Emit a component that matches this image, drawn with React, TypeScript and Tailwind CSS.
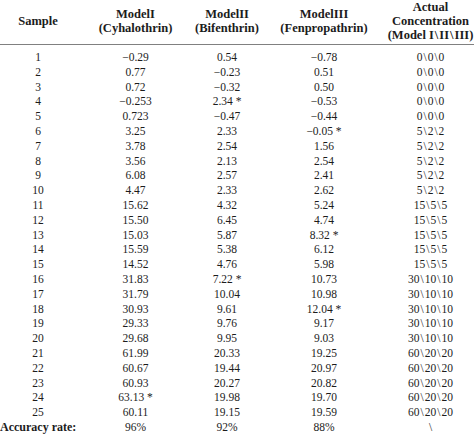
const ROWS: [string, string, string, string, string][] = [
  ['1', '−0.29', '0.54', '−0.78', '0\\0\\0'],
  ['2', '0.77', '−0.23', '0.51', '0\\0\\0'],
  ['3', '0.72', '−0.32', '0.50', '0\\0\\0'],
  ['4', '−0.253', '2.34 *', '−0.53', '0\\0\\0'],
  ['5', '0.723', '−0.47', '−0.44', '0\\0\\0'],
  ['6', '3.25', '2.33', '−0.05 *', '5\\2\\2'],
  ['7', '3.78', '2.54', '1.56', '5\\2\\2'],
  ['8', '3.56', '2.13', '2.54', '5\\2\\2'],
  ['9', '6.08', '2.57', '2.41', '5\\2\\2'],
  ['10', '4.47', '2.33', '2.62', '5\\2\\2'],
  ['11', '15.62', '4.32', '5.24', '15\\5\\5'],
  ['12', '15.50', '6.45', '4.74', '15\\5\\5'],
  ['13', '15.03', '5.87', '8.32 *', '15\\5\\5'],
  ['14', '15.59', '5.38', '6.12', '15\\5\\5'],
  ['15', '14.52', '4.76', '5.98', '15\\5\\5'],
  ['16', '31.83', '7.22 *', '10.73', '30\\10\\10'],
  ['17', '31.79', '10.04', '10.98', '30\\10\\10'],
  ['18', '30.93', '9.61', '12.04 *', '30\\10\\10'],
  ['19', '29.33', '9.76', '9.17', '30\\10\\10'],
  ['20', '29.68', '9.95', '9.03', '30\\10\\10'],
  ['21', '61.99', '20.33', '19.25', '60\\20\\20'],
  ['22', '60.67', '19.44', '20.97', '60\\20\\20'],
  ['23', '60.93', '20.27', '20.82', '60\\20\\20'],
  ['24', '63.13 *', '19.98', '19.70', '60\\20\\20'],
  ['25', '60.11', '19.15', '19.59', '60\\20\\20'],
]

const GRID = 'grid grid-cols-[76px_119px_64px_130px_83px]'

function Cell({ children }: { children: React.ReactNode }) {
  return <div className="flex justify-center whitespace-nowrap">{children}</div>
}

// The concentration triples read "a\b\c"; give the backslashes a little room like the original face.
function Triple({ value }: { value: string }) {
  const parts = value.split('\\')
  return (
    <Cell>
      {parts.map((p, i) => (
        <span key={i}>
          {i > 0 && <span className="mx-[1px]">\</span>}
          {p}
        </span>
      ))}
    </Cell>
  )
}

export default function App() {
  return (
    <div className="h-[435px] w-[474px] overflow-hidden bg-white text-[#1c1c1c]" style={{ fontFamily: '"Liberation Serif", "Times New Roman", serif' }}>
      {/* Header */}
      <div className={`${GRID} h-[45px] items-center border-b border-[#808080] pb-[5px] text-[12.5px] font-bold leading-[14px]`}>
        <Cell>Sample</Cell>
        <div className="flex flex-col items-center whitespace-nowrap">
          <span>ModelI</span>
          <span>(Cyhalothrin)</span>
        </div>
        <div className="flex flex-col items-center whitespace-nowrap">
          <span>ModelII</span>
          <span>(Bifenthrin)</span>
        </div>
        <div className="flex flex-col items-center whitespace-nowrap">
          <span>ModelIII</span>
          <span>(Fenpropathrin)</span>
        </div>
        <div className="flex flex-col items-center whitespace-nowrap">
          <span>Actual</span>
          <span>Concentration</span>
          <span>(Model I<span className="mx-[1px]">\</span>II<span className="mx-[1px]">\</span>III)</span>
        </div>
      </div>

      {/* Body */}
      <div className="pt-[5px] text-[11.5px] leading-[14.8px]">
        {ROWS.map((r) => (
          <div key={r[0]} className={`${GRID} h-[14.8px] items-center`}>
            <Cell>{r[0]}</Cell>
            <Cell>{r[1]}</Cell>
            <Cell>{r[2]}</Cell>
            <Cell>{r[3]}</Cell>
            <Triple value={r[4]} />
          </div>
        ))}
        <div className={`${GRID} h-[14.8px] items-center`}>
          <div className="whitespace-nowrap text-[12px] font-bold">Accuracy rate:</div>
          <Cell>96%</Cell>
          <Cell>92%</Cell>
          <Cell>88%</Cell>
          <Cell>\</Cell>
        </div>
      </div>
    </div>
  )
}
